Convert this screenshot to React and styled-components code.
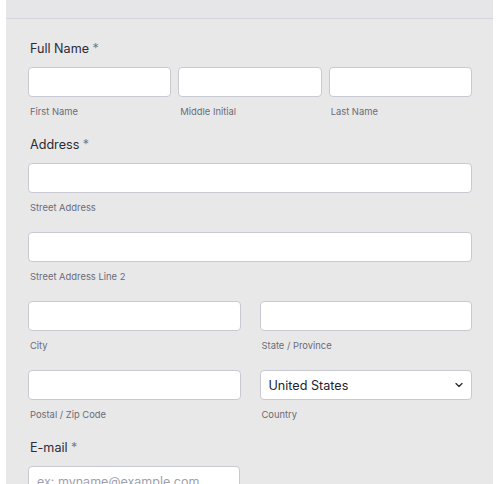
import React from "react";
import styled, { createGlobalStyle } from "styled-components";

const GlobalStyle = createGlobalStyle`
  body {
    margin: 0;
    background: #ffffff;
    font-family: Inter, "Noto Sans", sans-serif;
  }
`;

const Page = styled.div`
  margin-left: 6px;
  width: 487px;
  height: 484px;
  overflow: hidden;
  background: #e8e8e9;
`;

const TopStrip = styled.div`
  height: 18px;
  border-bottom: 1px solid #d5d5de;
  background: #e6e6e8;
`;

const Form = styled.form`
  padding: 21px 21px 0 22px;
  display: flex;
  flex-direction: column;
  gap: 18px;
`;

const Section = styled.div`
  display: flex;
  flex-direction: column;
`;

const Label = styled.div`
  padding-left: 2px;
  font-size: 12.6px;
  line-height: 17px;
  color: #2b2b35;
  margin-bottom: 10px;

  span {
    color: #7a7a86;
  }
`;

const Rows = styled.div`
  display: flex;
  flex-direction: column;
  gap: 18px;
`;

const Row = styled.div`
  display: grid;
  grid-template-columns: repeat(${(p) => p.$cols || 1}, 1fr);
  column-gap: ${(p) => p.$gap || 0}px;
  width: ${(p) => p.$width || "100%"};
`;

const Field = styled.div`
  display: flex;
  flex-direction: column;
  min-width: 0;
`;

const Input = styled.input`
  box-sizing: border-box;
  height: 30px;
  width: 100%;
  border: 1px solid #c9c9d4;
  border-radius: 4px;
  background: #ffffff;
  padding: 0 8px;
  font-family: inherit;
  font-size: 12.5px;
  color: #222;

  &::placeholder {
    color: #a0a0ad;
  }
`;

const SelectBox = styled.div`
  position: relative;
  box-sizing: border-box;
  height: 30px;
  border: 1px solid #c9c9d4;
  border-radius: 4px;
  background: #ffffff;
  display: flex;
  align-items: center;
  padding: 0 8px;
  font-size: 12.6px;
  color: #23232c;
`;

const Chevron = styled.svg`
  position: absolute;
  right: 8px;
  top: 50%;
  transform: translateY(-50%);
`;

const Sub = styled.div`
  margin-top: 9px;
  padding-left: 2px;
  font-size: 9.4px;
  line-height: 12px;
  color: #6b6b78;
`;

const TextField = ({ sub, placeholder }) => (
  <Field>
    <Input placeholder={placeholder} />
    {sub && <Sub>{sub}</Sub>}
  </Field>
);

const App = () => (
  <>
    <GlobalStyle />
    <Page>
      <TopStrip />
      <Form>
        <Section>
          <Label>
            Full Name <span>*</span>
          </Label>
          <Row $cols={3} $gap={7}>
            <TextField sub="First Name" />
            <TextField sub="Middle Initial" />
            <TextField sub="Last Name" />
          </Row>
        </Section>

        <Section>
          <Label>
            Address <span>*</span>
          </Label>
          <Rows>
            <Row>
              <TextField sub="Street Address" />
            </Row>
            <Row>
              <TextField sub="Street Address Line 2" />
            </Row>
            <Row $cols={2} $gap={19}>
              <TextField sub="City" />
              <TextField sub="State / Province" />
            </Row>
            <Row $cols={2} $gap={19}>
              <TextField sub="Postal / Zip Code" />
              <Field>
                <SelectBox>
                  United States
                  <Chevron width="8" height="5" viewBox="0 0 8 5">
                    <path
                      d="M1 1l3 3 3-3"
                      fill="none"
                      stroke="#2b2b35"
                      strokeWidth="1.3"
                      strokeLinecap="round"
                      strokeLinejoin="round"
                    />
                  </Chevron>
                </SelectBox>
                <Sub>Country</Sub>
              </Field>
            </Row>
          </Rows>
        </Section>

        <Section>
          <Label>
            E-mail <span>*</span>
          </Label>
          <Row $width="212px">
            <TextField placeholder="ex: myname@example.com" />
          </Row>
        </Section>
      </Form>
    </Page>
  </>
);

export default App;
